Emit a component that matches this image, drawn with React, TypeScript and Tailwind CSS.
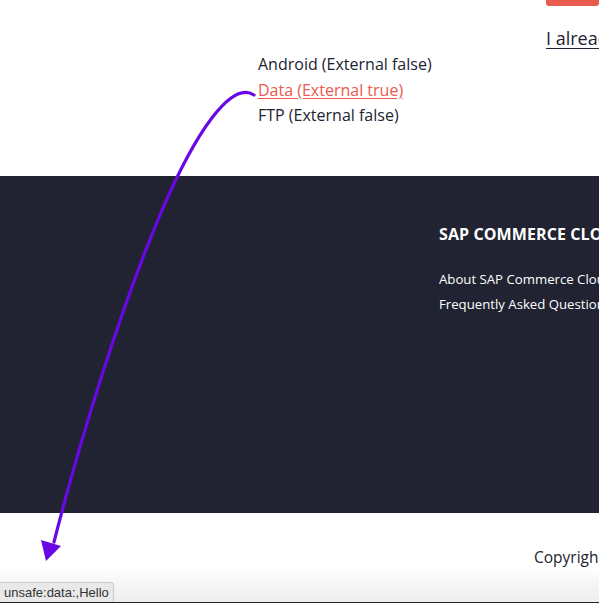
import React from 'react';

const links = [
    { label: 'Android (External false)', external: false },
    { label: 'Data (External true)', external: true },
    { label: 'FTP (External false)', external: false },
];

export default function App() {
    return (
        <div
            className="relative w-[599px] h-[603px] overflow-hidden bg-white text-[#212332]"
            style={{ fontFamily: '"Open Sans", "Noto Sans", sans-serif' }}
        >
            {/* top content */}
            <div className="h-[176px] relative">
                <div className="flex justify-end">
                    <div className="w-[53px] h-[6px] bg-[#ea5a4f] rounded-b-[3px]" />
                </div>
                <div className="pl-[546px] pt-[18px] whitespace-nowrap text-[18px] leading-[28px] underline underline-offset-[3px]">
                    I already have an account
                </div>
                <ul className="pl-[258px] text-[16px] leading-[25.5px] whitespace-nowrap">
                    {links.map((l) => (
                        <li
                            key={l.label}
                            className={l.external ? 'text-[#ea5a4f] underline underline-offset-[2px]' : ''}
                        >
                            {l.label}
                        </li>
                    ))}
                </ul>
            </div>

            {/* footer */}
            <div className="h-[337px] bg-[#212332] text-white pl-[439px] pt-[47px] whitespace-nowrap">
                <h4 className="text-[16px] font-bold leading-[22px] tracking-[0.1px]">SAP COMMERCE CLOUD</h4>
                <ul className="mt-[22px] text-[13.2px] leading-[25px]">
                    <li>About SAP Commerce Cloud</li>
                    <li>Frequently Asked Questions</li>
                </ul>
            </div>

            <div className="pl-[534px] pt-[33px] text-[15.5px] whitespace-nowrap">Copyright</div>

            {/* browser bottom fade + status bubble */}
            <div className="absolute left-0 right-0 bottom-0 h-[36px] bg-gradient-to-b from-white/0 to-[#ececec]" />
            <div className="absolute left-0 right-0 bottom-0 h-px bg-[#222]" />
            <div
                className="absolute left-0 bottom-px h-[20px] px-[4px] flex items-center bg-[#e9e9e9] border-t border-r border-[#c9c9c9] rounded-tr-[4px] text-[13px] text-[#333]"
                style={{ fontFamily: '"Liberation Sans", Arial, sans-serif' }}
            >
                unsafe:data:,Hello
            </div>

            {/* annotation arrow */}
            <svg className="absolute inset-0 pointer-events-none" width="599" height="603" viewBox="0 0 599 603">
                <path
                    d="M254 95 C232 80 196 130 160 215 C120 310 80 440 54 542"
                    fill="none"
                    stroke="#6a07e6"
                    strokeWidth="3.2"
                    strokeLinecap="round"
                />
                <polygon points="41,540 61,546 46,561" fill="#6a07e6" />
            </svg>
        </div>
    );
}
